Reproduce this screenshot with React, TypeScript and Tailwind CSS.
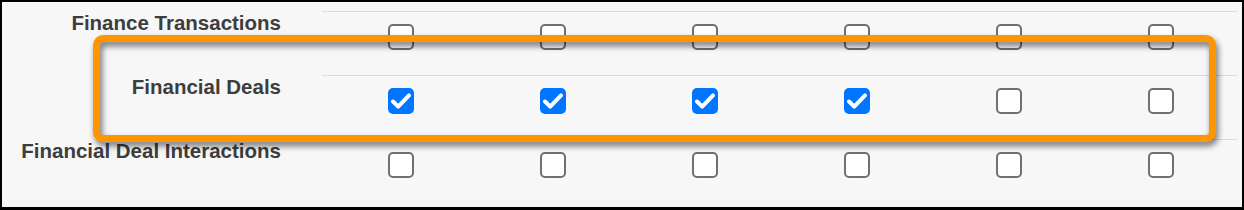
const columns = 6;

const rows = [
  { label: 'Finance Transactions', checked: [false, false, false, false, false, false] },
  { label: 'Financial Deals', checked: [true, true, true, true, false, false] },
  { label: 'Financial Deal Interactions', checked: [false, false, false, false, false, false] },
];

function Checkbox({ checked }: { checked: boolean }) {
  if (checked) {
    return (
      <div className="flex h-[26px] w-[26px] items-center justify-center rounded-[5px] bg-[#0075ff]">
        <svg width="26" height="26" viewBox="0 0 26 26" fill="none">
          <path
            d="M5 13.5 L10.2 18.6 L21 7.4"
            stroke="#ffffff"
            strokeWidth="4"
            strokeLinecap="round"
            strokeLinejoin="round"
          />
        </svg>
      </div>
    );
  }
  return <div className="h-[26px] w-[26px] rounded-[5px] border-2 border-[#707070] bg-white" />;
}

export default function App() {
  return (
    <div className="relative h-[210px] w-[1244px] overflow-hidden border-2 border-b-[3px] border-black bg-[#f7f7f7] pt-[9px] font-['Liberation_Sans',Arial,sans-serif]">
      {rows.map((row) => (
        <div key={row.label} className="flex h-[64px]">
          <div className="w-[320px] shrink-0 pr-[41px] text-right text-[20.5px] leading-[24px] font-bold whitespace-nowrap text-[#3d3d3d]">
            {row.label}
          </div>
          <div className="flex w-[915px] border-t border-[#dedcc4] pl-[3px]">
            {Array.from({ length: columns }).map((_, i) => (
              <div key={i} className="flex w-[152px] justify-center pt-[12px]">
                <Checkbox checked={row.checked[i]} />
              </div>
            ))}
          </div>
        </div>
      ))}

      {/* highlight around the Financial Deals row */}
      <div className="pointer-events-none absolute top-[33px] left-[91px] h-[107px] w-[1123px] rounded-[10px] border-[7px] border-[#fd9600] drop-shadow-[2px_4px_3px_rgba(0,0,0,0.55)]" />
    </div>
  );
}
